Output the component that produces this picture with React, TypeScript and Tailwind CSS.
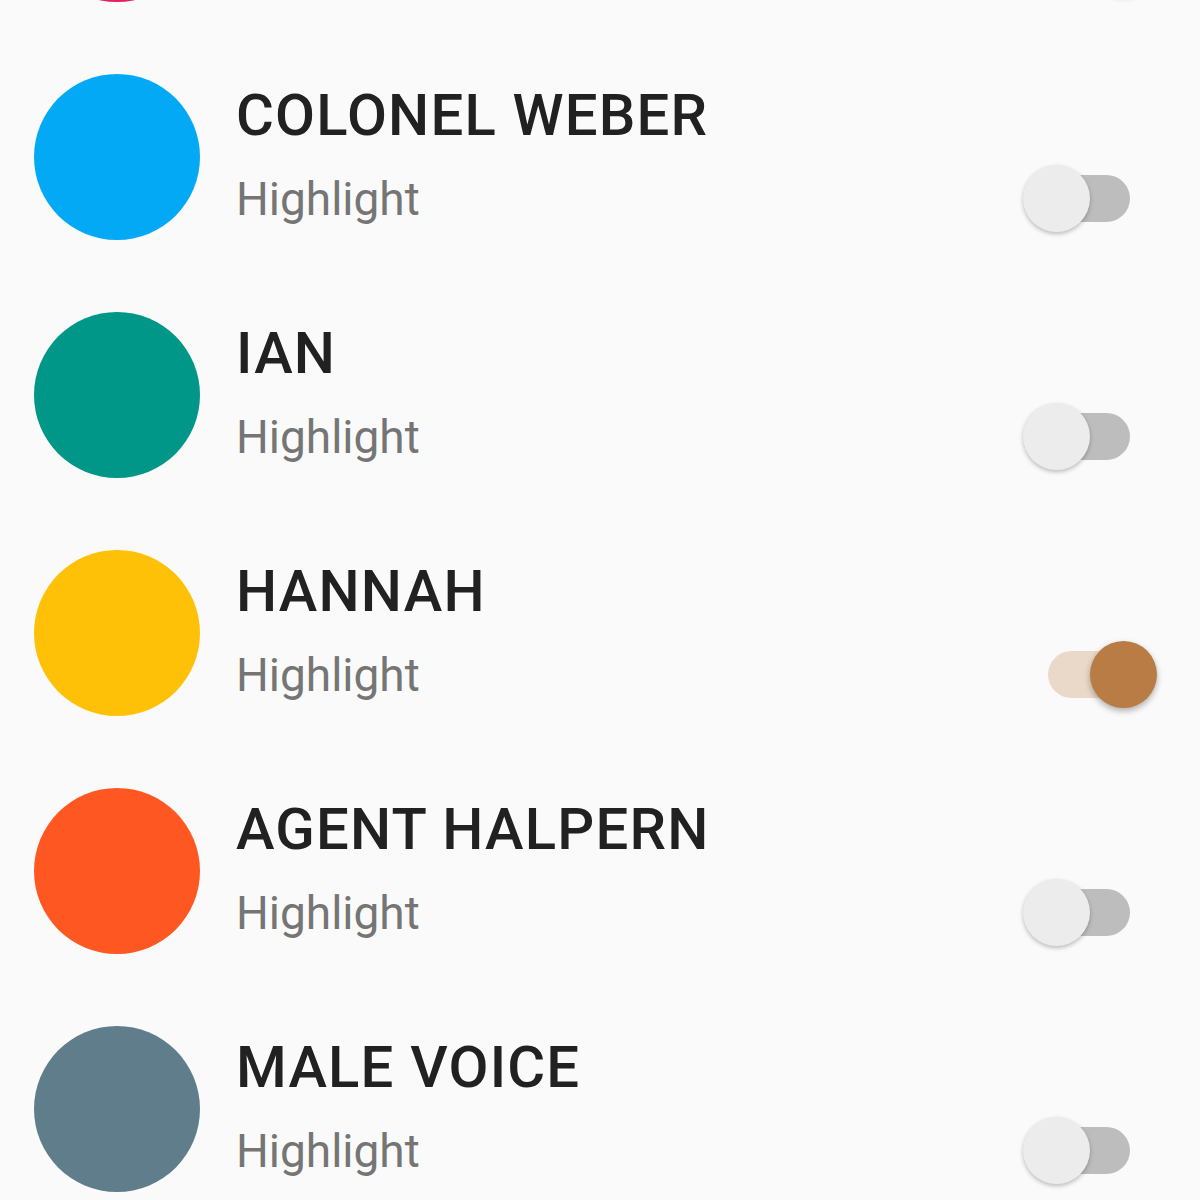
import React from 'react';

interface Voice {
  name: string;
  color: string;
  on: boolean;
}

// first row is scrolled mostly off the top of the screen
const voices: Voice[] = [
  { name: '', color: 'bg-[#e91e63]', on: true },
  { name: 'COLONEL WEBER', color: 'bg-[#03a9f4]', on: false },
  { name: 'IAN', color: 'bg-[#009688]', on: false },
  { name: 'HANNAH', color: 'bg-[#ffc107]', on: true },
  { name: 'AGENT HALPERN', color: 'bg-[#ff5722]', on: false },
  { name: 'MALE VOICE', color: 'bg-[#607d8b]', on: false },
];

const Toggle: React.FC<{ on: boolean }> = ({ on }) => (
  <div className="relative mt-[175px] w-[82px] h-[47px] shrink-0">
    <div className={`w-full h-full rounded-full ${on ? 'bg-[#ead9c9]' : 'bg-[#bdbdbd]'}`} />
    <div
      className={`absolute top-[-10px] w-[67px] h-[67px] rounded-full ${
        on
          ? 'left-[42px] bg-[#b97c44] shadow-[0_3px_6px_rgba(0,0,0,0.3)]'
          : 'left-[-25px] bg-[#ececec] shadow-[0_2px_4px_rgba(0,0,0,0.25)]'
      }`}
    />
  </div>
);

const App: React.FC = () => {
  return (
    <div className="w-[1200px] h-[1200px] overflow-hidden bg-[#fafafa]" style={{ fontFamily: 'Roboto, "Noto Sans", sans-serif' }}>
      <div className="flex flex-col mt-[-238px]">
        {voices.map((v, i) => (
          <div key={i} className="flex h-[238px] shrink-0 pl-[34px] pr-[70px]">
            <div className={`mt-[74px] w-[166px] h-[166px] rounded-full shrink-0 ${v.color}`} />
            {v.name && (
              <div className="ml-[36px] flex flex-col">
                <div className="mt-[81px] text-[58px] leading-[68px] font-medium text-[#212121] tracking-[1.2px] whitespace-nowrap">
                  {v.name}
                </div>
                <div className="mt-[23px] text-[46px] leading-[54px] text-[#757575]">Highlight</div>
              </div>
            )}
            <div className="ml-auto">
              <Toggle on={v.on} />
            </div>
          </div>
        ))}
      </div>
    </div>
  );
};

export default App;
